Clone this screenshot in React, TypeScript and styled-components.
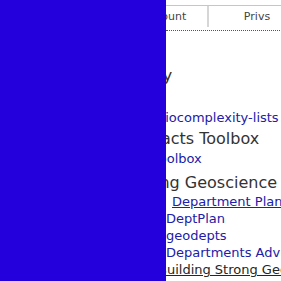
import React from "react";
import styled, { createGlobalStyle } from "styled-components";

const GlobalStyle = createGlobalStyle`
  html, body { margin: 0; padding: 0; background: #fff; overflow: hidden; }
  body { font-family: "DejaVu Sans", Verdana, sans-serif; }
`;

const Viewport = styled.div`
  position: relative;
  width: 281px;
  height: 281px;
  overflow: hidden;
  background: #fff;
`;

const Sidebar = styled.aside`
  position: absolute;
  left: 0;
  top: 0;
  bottom: 0;
  width: 166px;
  background: #2400dc;
  z-index: 2;
`;

const Page = styled.main`
  padding: 5px 0 0 166px;
  width: 600px;
`;

const HeaderTable = styled.div<{ $offset: number }>`
  display: flex;
  margin-left: ${(p) => -p.$offset}px;
  border-top: 1px solid #c6c6c6;
`;

const HeaderCell = styled.div<{ $w: number }>`
  flex: none;
  width: ${(p) => p.$w}px;
  height: 21px;
  text-align: center;
  font-size: 11px;
  line-height: 21px;
  color: #444;
  border-right: 2px solid #d6d6d6;
`;

const DottedRule = styled.div`
  margin-top: 3px;
  border-top: 1px dotted #555;
`;

const Section = styled.section<{ $top: number }>`
  margin-top: ${(p) => p.$top}px;
`;

const Heading = styled.h2<{ $offset: number }>`
  margin: 0 0 0 ${(p) => -p.$offset}px;
  font-size: 16px;
  font-weight: normal;
  line-height: 16px;
  color: #333;
  white-space: nowrap;
`;

const LinkList = styled.ul<{ $gap: number }>`
  list-style: none;
  margin: ${(p) => p.$gap}px 0 0;
  padding: 0;
`;

const Item = styled.li<{ $offset?: number }>`
  margin-left: ${(p) => -(p.$offset ?? 0)}px;
  font-size: 13px;
  line-height: 17px;
  white-space: nowrap;
`;

const Link = styled.a<{ $tone?: "blue" | "dark"; $underline?: boolean }>`
  color: ${(p) => (p.$tone === "dark" ? "#262626" : "#2020a8")};
  text-decoration: ${(p) => (p.$underline ? "underline" : "none")};
`;

export default function App() {
  return (
    <>
      <GlobalStyle />
      <Viewport>
        <Sidebar />
        <Page>
          <HeaderTable $offset={45}>
            <HeaderCell $w={86}>Account</HeaderCell>
            <HeaderCell $w={96}>Privs</HeaderCell>
          </HeaderTable>
          <DottedRule />

          <Section $top={37}>
            <Heading $offset={107}>Biocomplexity</Heading>
            <LinkList $gap={25}>
              <Item $offset={9}>
                <Link href="#">biocomplexity-lists</Link>
              </Item>
            </LinkList>
          </Section>

          <Section $top={5}>
            <Heading $offset={104}>Broader Impacts Toolbox</Heading>
            <LinkList $gap={3}>
              <Item $offset={13}>
                <Link href="#">Toolbox</Link>
              </Item>
            </LinkList>
          </Section>

          <Section $top={8}>
            <Heading $offset={109}>Building Strong Geoscience Departments</Heading>
            <LinkList $gap={2}>
              <Item $offset={-6}>
                <Link href="#" $underline>Department Plan</Link>
              </Item>
              <Item>
                <Link href="#">DeptPlan</Link>
              </Item>
              <Item>
                <Link href="#">geodepts</Link>
              </Item>
              <Item>
                <Link href="#">Departments Advisory</Link>
              </Item>
              <Item $offset={8}>
                <Link href="#" $tone="dark" $underline>Building Strong Geoscience Departments</Link>
              </Item>
            </LinkList>
          </Section>
        </Page>
      </Viewport>
    </>
  );
}
